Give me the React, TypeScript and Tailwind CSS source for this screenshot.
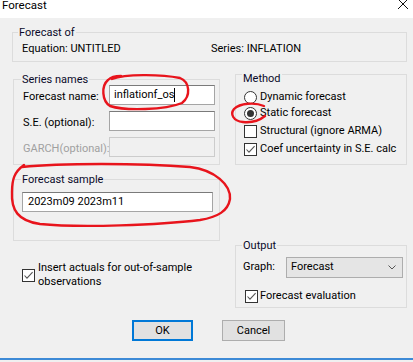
import type { ReactNode } from 'react'

function GroupBox({
  label,
  className = '',
  labelClass = '',
  children,
}: {
  label: string
  className?: string
  labelClass?: string
  children?: ReactNode
}) {
  return (
    <div className={`relative border border-[#dcdcdc] ${className}`}>
      <span className={`absolute bg-[#f0f0f0] px-[1px] leading-[16px] text-[#0a0a2a] whitespace-nowrap ${labelClass}`}>
        {label}
      </span>
      {children}
    </div>
  )
}

function CheckBox({ checked = false }: { checked?: boolean }) {
  return (
    <span className="w-[13px] h-[13px] shrink-0 border border-[#333333] bg-white flex items-center justify-center">
      {checked && (
        <svg width="11" height="11" viewBox="0 0 11 11">
          <path d="M1.5 5.5 L4 8.2 L9.6 2.2" fill="none" stroke="#555555" strokeWidth="1.1" />
        </svg>
      )}
    </span>
  )
}

function Radio({ checked = false }: { checked?: boolean }) {
  return (
    <span className="w-[13px] h-[13px] shrink-0 rounded-full border border-[#333333] bg-white flex items-center justify-center">
      {checked && <span className="w-[7px] h-[7px] rounded-full bg-[#333333]" />}
    </span>
  )
}

function Field({ label, value = '', disabled = false }: { label: string; value?: string; disabled?: boolean }) {
  return (
    <div className="flex items-center h-[20px]">
      <span className={`w-[95px] pl-[9px] mt-[4px] leading-[16px] whitespace-nowrap ${disabled ? 'text-[#a0a0a0]' : ''}`}>
        {label}
      </span>
      <div
        className={`w-[106px] h-[20px] border flex items-center pl-[4px] ${
          disabled ? 'bg-[#f0f0f0] border-[#cccccc]' : 'bg-white border-[#a5a5a5] border-t-[#7a7a7a]'
        }`}
      >
        {value}
        {value && <span className="w-[1px] h-[14px] bg-black" />}
      </div>
    </div>
  )
}

export default function App() {
  return (
    <div className="w-[413px] h-[362px] bg-[#f0f0f0] relative overflow-hidden text-[11px] text-black font-['Roboto',sans-serif]">
      {/* title bar */}
      <div className="h-[18px] bg-white flex justify-between">
        <span className="pl-[2px] -mt-[3px] leading-[16px] text-[11.5px]">Forecast</span>
        <svg width="12" height="12" viewBox="0 0 12 12" className="-mt-[2px] mr-[4px]">
          <path d="M1 1 L11 11 M11 1 L1 11" stroke="#111" strokeWidth="1" />
        </svg>
      </div>

      {/* Forecast of */}
      <GroupBox label="Forecast of" className="mt-[14px] ml-[12px] w-[395px] h-[30px]" labelClass="left-[5px] top-[-8px]">
        <div className="flex pl-[9px] pt-[8px] leading-[16px]">
          <span className="w-[189px]">Equation: UNTITLED</span>
          <span>Series: INFLATION</span>
        </div>
      </GroupBox>

      <div className="flex items-start ml-[13px]">
        {/* left column */}
        <div className="w-[207px]">
          <GroupBox label="Series names" className="mt-[17px] h-[86px]" labelClass="left-[7px] top-[-8px]">
            <div className="pt-[5px] flex flex-col gap-[6px]">
              <Field label="Forecast name:" value="inflationf_os" />
              <Field label="S.E. (optional):" />
              <Field label="GARCH(optional):" disabled />
            </div>
          </GroupBox>

          <GroupBox label="Forecast sample" className="mt-[14px] h-[62px]" labelClass="left-[7px] top-[-8px]">
            <div className="pt-[12px] pl-[8px]">
              <div className="w-[191px] h-[20px] bg-white border border-[#a5a5a5] border-t-[#7a7a7a] flex items-center pl-[5px]">
                2023m09 2023m11
              </div>
            </div>
          </GroupBox>

          <div className="mt-[20px] pl-[9px] flex items-center">
            <CheckBox checked />
            <span className="ml-[3px] leading-[14px]">
              Insert actuals for out-of-sample
              <br />
              observations
            </span>
          </div>
        </div>

        {/* right column */}
        <div className="ml-[15px] w-[172px]">
          <GroupBox label="Method" className="mt-[12px] h-[91px]" labelClass="left-[6px] top-[-4px]">
            <div className="pt-[14px] pl-[8px] leading-[16px]">
              <div className="flex items-center h-[16px]">
                <Radio />
                <span className="ml-[3px]">Dynamic forecast</span>
              </div>
              <div className="flex items-center h-[16px]">
                <Radio checked />
                <span className="ml-[3px]">Static forecast</span>
              </div>
              <div className="flex items-center h-[16px] mt-[2px]">
                <CheckBox />
                <span className="ml-[3px]">Structural (ignore ARMA)</span>
              </div>
              <div className="flex items-center h-[16px] mt-[2px]">
                <CheckBox checked />
                <span className="ml-[3px] whitespace-nowrap">Coef uncertainty in S.E. calc</span>
              </div>
            </div>
          </GroupBox>

          <GroupBox label="Output" className="mt-[80px] h-[63px]" labelClass="left-[6px] top-[-8px]">
            <div className="pt-[11px] pl-[7px] flex items-center">
              <span className="w-[43px]">Graph:</span>
              <div className="w-[117px] h-[21px] bg-[#e5e5e5] border border-[#adadad] flex items-center justify-between pl-[4px] pr-[6px]">
                <span>Forecast</span>
                <svg width="8" height="5" viewBox="0 0 8 5">
                  <path d="M0.5 0.5 L4 4 L7.5 0.5" fill="none" stroke="#555" strokeWidth="1" />
                </svg>
              </div>
            </div>
            <div className="mt-[10px] pl-[9px] flex items-center h-[16px]">
              <CheckBox checked />
              <span className="ml-[2px]">Forecast evaluation</span>
            </div>
          </GroupBox>
        </div>
      </div>

      {/* buttons */}
      <div className="flex mt-[12px] ml-[132px]">
        <button className="w-[61px] h-[21px] bg-[#e1e1e1] border-2 border-[#0078d7] leading-none">OK</button>
        <button className="ml-[29px] w-[63px] h-[21px] bg-[#e1e1e1] border border-[#adadad] leading-none">Cancel</button>
      </div>

      <div className="mt-[17px] h-[2px] bg-[#3d8ad6]" />

      {/* red hand-drawn annotations */}
      <svg width="413" height="362" viewBox="0 0 413 362" className="absolute top-0 left-0 pointer-events-none">
        <g fill="none" stroke="#e8141c" strokeWidth="2.4" strokeLinecap="round" strokeLinejoin="round">
          <path d="M112 79 C125 74, 160 74, 180 78 C190 82, 191 96, 182 103 C165 110, 125 111, 110 106 C102 101, 101 86, 108 80 C111 77, 116 76, 121 76" />
          <path d="M264 106 C255 102, 240 103, 234 109 C230 114, 233 121, 243 122 C252 123, 260 120, 265 116" />
          <path d="M22 167 C60 163, 140 163, 190 167 C215 170, 231 185, 230 199 C228 211, 218 217, 200 220 C160 225, 80 228, 40 224 C18 221, 11 210, 12 192 C12 180, 14 172, 24 165" />
        </g>
      </svg>
    </div>
  )
}
